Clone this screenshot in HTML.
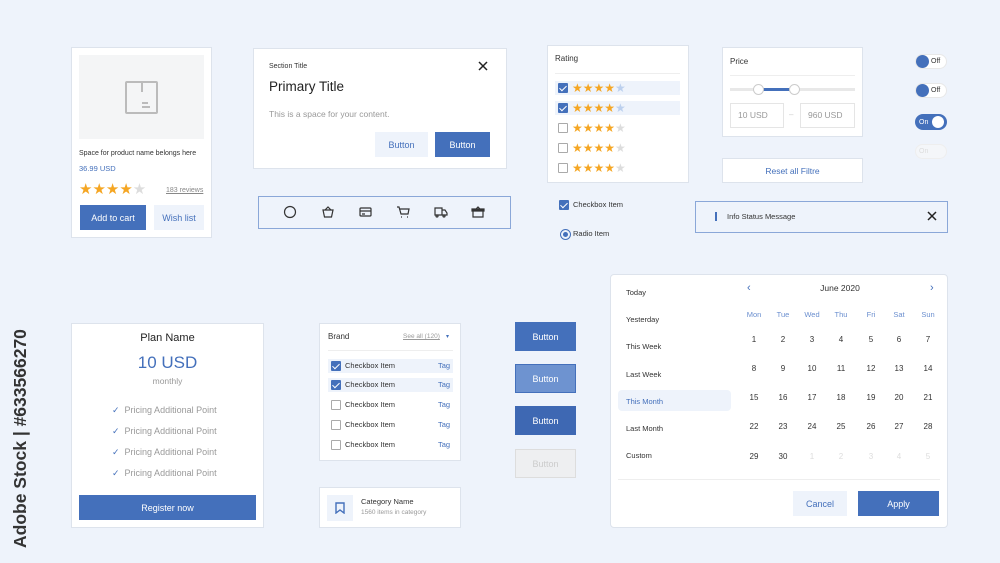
<!DOCTYPE html>
<html><head><meta charset="utf-8"><style>
*{margin:0;padding:0;box-sizing:border-box}
body{width:1000px;height:563px;background:#eef3fb;font-family:"Liberation Sans",sans-serif;position:relative;overflow:hidden;color:#333}
.a{position:absolute}
.card{position:absolute;background:#fff;border:1px solid #dde3ec}
.t{position:absolute;white-space:nowrap;line-height:1}
.btn{position:absolute;background:#4470bb;color:#fff;font-size:9px;display:flex;align-items:center;justify-content:center}
.lbtn{position:absolute;background:#eef3fb;color:#4470bb;font-size:9px;display:flex;align-items:center;justify-content:center}
.st{color:#f5a623;font-size:12px;letter-spacing:0px}
.cb{position:absolute;width:10px;height:10px;border:1px solid #aaa;border-radius:1px;background:#fff}
.cb.on{background:#4470bb;border-color:#4470bb}
.cb.on::after{content:"";position:absolute;left:2px;top:0px;width:3px;height:6px;border:solid #fff;border-width:0 1.5px 1.5px 0;transform:rotate(45deg)}
.hl{position:absolute;background:#eef3fb}
.day{position:absolute;font-size:8px;width:20px;text-align:center;color:#333}
</style></head><body>

<!-- watermark -->
<div class="t" style="left:12px;top:548px;transform:rotate(-90deg);transform-origin:0 0;font-size:17.5px;font-weight:bold;color:#333;font-family:'Liberation Sans',sans-serif;width:230px">Adobe Stock | #633566270</div>

<!-- product card -->
<div class="card" style="left:71px;top:47px;width:141px;height:191px"></div>
<div class="a" style="left:79px;top:55px;width:125px;height:84px;background:#f4f5f6"></div>
<div class="a" style="left:125px;top:81px;width:33px;height:33px;border:2px solid #bbb;border-radius:2px"></div>
<div class="a" style="left:141px;top:83px;width:2px;height:9px;background:#bbb"></div>
<div class="a" style="left:142px;top:102px;width:6px;height:1.5px;background:#bbb"></div>
<div class="a" style="left:142px;top:106px;width:8px;height:1.5px;background:#bbb"></div>
<div class="t" style="left:79px;top:150px;font-size:7px">Space for product name belongs here</div>
<div class="t" style="left:79px;top:165px;font-size:7.5px;color:#4470bb">36.99 USD</div>
<div class="t st" style="left:79px;top:182px;font-size:15px">★★★★<span style="color:#ddd">★</span></div>
<div class="t" style="left:166px;top:187px;font-size:7px;color:#888;text-decoration:underline">183 reviews</div>
<div class="btn" style="left:80px;top:205px;width:66px;height:25px">Add to cart</div>
<div class="lbtn" style="left:154px;top:205px;width:50px;height:25px">Wish list</div>

<!-- modal -->
<div class="card" style="left:253px;top:48px;width:254px;height:121px"></div>
<div class="t" style="left:269px;top:63px;font-size:7px">Section Title</div>
<div class="t" style="left:269px;top:80px;font-size:13.5px;color:#222">Primary Title</div>
<div class="t" style="left:269px;top:110px;font-size:8.5px;color:#999">This is a space for your content.</div>
<svg class="a" style="left:478px;top:61px" width="10" height="10"><path d="M1 1L9 9M9 1L1 9" stroke="#222" stroke-width="1.5"/></svg>
<div class="lbtn" style="left:375px;top:132px;width:53px;height:25px">Button</div>
<div class="btn" style="left:435px;top:132px;width:55px;height:25px">Button</div>

<!-- icon bar -->
<div class="a" style="left:258px;top:196px;width:253px;height:33px;border:1px solid #8aa7d8;background:#eef3fb"></div>
<svg class="a" style="left:280px;top:204px" width="210" height="16" fill="none" stroke="#333" stroke-width="1.2">
<circle cx="10" cy="8" r="5.5"/>
<path d="M43 6h10l-1.5 7h-7zM45 6l3-3 3 3"/>
<rect x="80" y="4" width="11" height="8" rx="1"/><path d="M80 7h11M82 10h3"/>
<path d="M117 3h2l2 7h7l1-5h-9M121 13h1M127 13h1"/>
<path d="M155 4h7v7h-7zM162 6h3l2 3v2h-5"/><circle cx="157" cy="12" r="1"/><circle cx="164" cy="12" r="1"/>
<path d="M193 6h10v7h-10zM192 5h12v2h-12zM196 5l2-2 2 2"/>
</svg>

<!-- rating -->
<div class="card" style="left:547px;top:45px;width:142px;height:138px"></div>
<div class="t" style="left:555px;top:55px;font-size:8px">Rating</div>
<div class="a" style="left:555px;top:73px;width:125px;height:1px;background:#eee"></div>
<div class="hl" style="left:555px;top:81px;width:125px;height:14px"></div>
<div class="hl" style="left:555px;top:101px;width:125px;height:14px"></div>
<div class="cb on" style="left:558px;top:83px"></div>
<div class="cb on" style="left:558px;top:103px"></div>
<div class="cb" style="left:558px;top:123px"></div>
<div class="cb" style="left:558px;top:143px"></div>
<div class="cb" style="left:558px;top:163px"></div>
<div class="t st" style="left:572px;top:82px">★★★★<span style="color:#bcd0ee">★</span></div>
<div class="t st" style="left:572px;top:102px">★★★★<span style="color:#bcd0ee">★</span></div>
<div class="t st" style="left:572px;top:122px">★★★★<span style="color:#ddd">★</span></div>
<div class="t st" style="left:572px;top:142px">★★★★<span style="color:#ddd">★</span></div>
<div class="t st" style="left:572px;top:162px">★★★★<span style="color:#ddd">★</span></div>

<div class="cb on" style="left:559px;top:200px"></div>
<div class="t" style="left:573px;top:201px;font-size:7.5px">Checkbox Item</div>
<div class="a" style="left:560px;top:229px;width:11px;height:11px;border:1.5px solid #4470bb;border-radius:50%"></div>
<div class="a" style="left:563px;top:232px;width:5px;height:5px;background:#4470bb;border-radius:50%"></div>
<div class="t" style="left:573px;top:230px;font-size:7.5px">Radio Item</div>

<!-- price -->
<div class="card" style="left:722px;top:47px;width:141px;height:90px"></div>
<div class="t" style="left:730px;top:58px;font-size:8px">Price</div>
<div class="a" style="left:730px;top:75px;width:125px;height:1px;background:#eee"></div>
<div class="a" style="left:730px;top:88px;width:125px;height:3px;background:#e8e8e8"></div>
<div class="a" style="left:758px;top:88px;width:36px;height:3px;background:#4470bb"></div>
<div class="a" style="left:753px;top:84px;width:11px;height:11px;border:1px solid #ccc;border-radius:50%;background:#fff"></div>
<div class="a" style="left:789px;top:84px;width:11px;height:11px;border:1px solid #ccc;border-radius:50%;background:#fff"></div>
<div class="a" style="left:730px;top:103px;width:54px;height:25px;border:1px solid #e5e5e5"></div>
<div class="t" style="left:738px;top:111px;font-size:8.5px;color:#999">10 USD</div>
<div class="t" style="left:789px;top:111px;font-size:8px;color:#ccc">–</div>
<div class="a" style="left:800px;top:103px;width:55px;height:25px;border:1px solid #e5e5e5"></div>
<div class="t" style="left:808px;top:111px;font-size:8.5px;color:#999">960 USD</div>

<div class="card" style="left:722px;top:158px;width:141px;height:25px;display:flex;align-items:center;justify-content:center;color:#4470bb;font-size:8.5px">Reset all Filtre</div>

<!-- toggles -->
<div class="a" style="left:915px;top:54px;width:32px;height:15px;border-radius:8px;background:#fff;border:1px solid #e8e8e8"></div>
<div class="a" style="left:916px;top:55px;width:13px;height:13px;border-radius:50%;background:#4470bb"></div>
<div class="t" style="left:931px;top:58px;font-size:7px">Off</div>
<div class="a" style="left:915px;top:83px;width:32px;height:15px;border-radius:8px;background:#fff;border:1px solid #e8e8e8"></div>
<div class="a" style="left:916px;top:84px;width:13px;height:13px;border-radius:50%;background:#4470bb"></div>
<div class="t" style="left:931px;top:87px;font-size:7px">Off</div>
<div class="a" style="left:915px;top:114px;width:32px;height:16px;border-radius:8px;background:#4470bb"></div>
<div class="a" style="left:932px;top:116px;width:12px;height:12px;border-radius:50%;background:#fff"></div>
<div class="t" style="left:919px;top:119px;font-size:7px;color:#fff">On</div>
<div class="a" style="left:915px;top:144px;width:32px;height:15px;border-radius:8px;background:#f4f6f9;border:1px solid #eee"></div>
<div class="t" style="left:919px;top:148px;font-size:7px;color:#ddd">On</div>

<!-- info -->
<div class="a" style="left:695px;top:201px;width:253px;height:32px;border:1px solid #8aa7d8;background:#eef3fb"></div>
<div class="a" style="left:715px;top:212px;width:2px;height:9px;background:#4470bb"></div>
<div class="t" style="left:727px;top:213px;font-size:7.5px">Info Status Message</div>
<svg class="a" style="left:927px;top:211px" width="10" height="10"><path d="M1 1L9 9M9 1L1 9" stroke="#222" stroke-width="1.5"/></svg>

<!-- plan -->
<div class="card" style="left:71px;top:323px;width:193px;height:205px"></div>
<div class="t" style="left:71px;top:333px;width:193px;text-align:center;font-size:11px;color:#222">Plan Name</div>
<div class="t" style="left:71px;top:354px;width:193px;text-align:center;font-size:17px;color:#4470bb">10 USD</div>
<div class="t" style="left:71px;top:377px;width:193px;text-align:center;font-size:8.5px;color:#999">monthly</div>
<div class="t" style="left:112px;top:400px;font-size:9px;color:#999;line-height:21px"><span style="color:#4470bb">✓</span>&nbsp; Pricing Additional Point<br><span style="color:#4470bb">✓</span>&nbsp; Pricing Additional Point<br><span style="color:#4470bb">✓</span>&nbsp; Pricing Additional Point<br><span style="color:#4470bb">✓</span>&nbsp; Pricing Additional Point</div>
<div class="btn" style="left:79px;top:495px;width:177px;height:25px">Register now</div>

<!-- brand -->
<div class="card" style="left:319px;top:323px;width:142px;height:138px"></div>
<div class="t" style="left:328px;top:333px;font-size:8px">Brand</div>
<div class="t" style="left:403px;top:334px;font-size:6.5px;color:#999;text-decoration:underline">See all (120)</div>
<div class="t" style="left:446px;top:334px;font-size:6px;color:#4470bb">▾</div>
<div class="a" style="left:328px;top:350px;width:125px;height:1px;background:#eee"></div>
<div class="hl" style="left:328px;top:359px;width:125px;height:14px"></div>
<div class="hl" style="left:328px;top:378px;width:125px;height:14px"></div>
<div class="cb on" style="left:331px;top:361px"></div><div class="t" style="left:345px;top:362px;font-size:7.5px">Checkbox Item</div><div class="t" style="left:438px;top:362px;font-size:7.5px;color:#4470bb">Tag</div>
<div class="cb on" style="left:331px;top:380px"></div><div class="t" style="left:345px;top:381px;font-size:7.5px">Checkbox Item</div><div class="t" style="left:438px;top:381px;font-size:7.5px;color:#4470bb">Tag</div>
<div class="cb" style="left:331px;top:400px"></div><div class="t" style="left:345px;top:401px;font-size:7.5px">Checkbox Item</div><div class="t" style="left:438px;top:401px;font-size:7.5px;color:#4470bb">Tag</div>
<div class="cb" style="left:331px;top:420px"></div><div class="t" style="left:345px;top:421px;font-size:7.5px">Checkbox Item</div><div class="t" style="left:438px;top:421px;font-size:7.5px;color:#4470bb">Tag</div>
<div class="cb" style="left:331px;top:440px"></div><div class="t" style="left:345px;top:441px;font-size:7.5px">Checkbox Item</div><div class="t" style="left:438px;top:441px;font-size:7.5px;color:#4470bb">Tag</div>

<!-- category -->
<div class="card" style="left:319px;top:487px;width:142px;height:41px"></div>
<div class="a" style="left:327px;top:495px;width:26px;height:26px;background:#eef3fb"></div>
<svg class="a" style="left:335px;top:502px" width="10" height="12"><path d="M1 1h8v10l-4-3-4 3z" fill="none" stroke="#4470bb" stroke-width="1.4"/></svg>
<div class="t" style="left:361px;top:498px;font-size:7.5px">Category Name</div>
<div class="t" style="left:361px;top:510px;font-size:6.5px;color:#999">1560 items in category</div>

<!-- buttons col -->
<div class="btn" style="left:515px;top:322px;width:61px;height:29px">Button</div>
<div class="btn" style="left:515px;top:364px;width:61px;height:29px;background:#6e93d0;border:1px solid #4470bb">Button</div>
<div class="btn" style="left:515px;top:406px;width:61px;height:29px;background:#3e68b3">Button</div>
<div class="btn" style="left:515px;top:449px;width:61px;height:29px;background:#eeeff1;border:1px solid #ddd;color:#ccc">Button</div>

<!-- calendar -->
<div class="card" style="left:610px;top:274px;width:338px;height:254px;border-radius:4px"></div>
<div class="hl" style="left:618px;top:390px;width:113px;height:21px;border-radius:4px"></div>
<div class="t" style="left:626px;top:279px;font-size:7.5px;line-height:27.2px">Today<br>Yesterday<br>This Week<br>Last Week<br><span style="color:#4470bb">This Month</span><br>Last Month<br>Custom</div>
<div class="t" style="left:747px;top:283px;font-size:11px;color:#4470bb">‹</div>
<div class="t" style="left:930px;top:283px;font-size:11px;color:#4470bb">›</div>
<div class="t" style="left:800px;top:284px;width:80px;text-align:center;font-size:8.5px">June 2020</div>
<div class="a" style="left:618px;top:479px;width:322px;height:1px;background:#eee"></div>
<div class="lbtn" style="left:793px;top:491px;width:54px;height:25px">Cancel</div>
<div class="btn" style="left:858px;top:491px;width:81px;height:25px">Apply</div>
<div id="cal"></div>
<script>
var xs=[754,783,812,841,871,899,928],ys=[339,368,397,426,456],h="",names=["Mon","Tue","Wed","Thu","Fri","Sat","Sun"];
for(var i=0;i<7;i++)h+='<div class="day" style="left:'+(xs[i]-10)+'px;top:310px;color:#6b8fcf;font-size:7.5px">'+names[i]+'</div>';
var d=1;for(var r=0;r<5;r++)for(var c=0;c<7;c++){var n=d,col="#333";if(d>30){n=d-30;col="#ddd"}h+='<div class="day" style="left:'+(xs[c]-10)+'px;top:'+(ys[r]-4)+'px;color:'+col+'">'+n+'</div>';d++}
document.getElementById("cal").innerHTML=h;
</script>
</body></html>
